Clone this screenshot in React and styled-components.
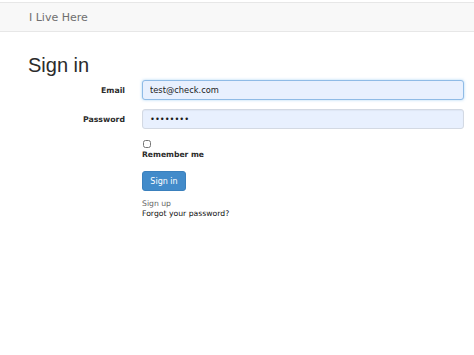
import React from "react";
import styled, { createGlobalStyle } from "styled-components";

const Global = createGlobalStyle`
  html, body { margin: 0; padding: 0; background: #fff; }
  body { font-family: "DejaVu Sans", Verdana, sans-serif; color: #333; }
  * { box-sizing: border-box; }
`;

const Navbar = styled.nav`
  margin-top: 2px;
  height: 30px;
  background: #f8f8f8;
  border-top: 1px solid #e7e7e7;
  border-bottom: 1px solid #e7e7e7;
  display: flex;
  align-items: center;
  padding-left: 29px;
`;

const Brand = styled.a`
  font-family: "DejaVu Sans", Verdana, sans-serif;
  font-size: 11px;
  color: #6f6f6f;
  text-decoration: none;
`;

const Container = styled.main`
  padding: 0 10px 0 28px;
`;

const Title = styled.h1`
  font-family: "Liberation Sans", Arial, sans-serif;
  font-weight: 400;
  font-size: 20px;
  line-height: 22px;
  margin: 22px 0 4px;
  color: #2b2b2b;
`;

const FormRow = styled.div`
  display: grid;
  grid-template-columns: 97px 1fr;
  column-gap: 17px;
  align-items: center;
  margin-bottom: 9px;
`;

const Label = styled.label`
  text-align: right;
  font-weight: 700;
  font-size: 7.8px;
  color: #2b2b2b;
`;

const Input = styled.input`
  height: 20px;
  width: 100%;
  margin: 0;
  padding: 0 7px;
  font-family: "DejaVu Sans", Verdana, sans-serif;
  font-size: 8.3px;
  color: #1a1a1a;
  background: #e8f0fe;
  border: 1px solid ${(p) => (p.$focused ? "#8fbbe6" : "#d3d9e3")};
  border-radius: 3px;
  box-shadow: ${(p) =>
    p.$focused ? "0 0 3px rgba(102,175,233,.55)" : "inset 0 1px 1px rgba(0,0,0,.04)"};
  outline: none;
  caret-color: #222;
`;

const Offset = styled.div`
  margin-left: 114px;
  display: flex;
  flex-direction: column;
  align-items: flex-start;
`;

const Check = styled.input`
  width: 8px;
  height: 8px;
  margin: 2px 0 0 1px;
`;

const CheckLabel = styled.label`
  margin-top: 2px;
  font-weight: 700;
  font-size: 7.6px;
  line-height: 10px;
  color: #2b2b2b;
`;

const Button = styled.button`
  margin-top: 11px;
  height: 20px;
  width: 44px;
  padding: 0;
  font-family: "DejaVu Sans", Verdana, sans-serif;
  font-size: 8px;
  color: #fff;
  background: #428bca;
  border: 1px solid #3a80bd;
  border-radius: 3px;
`;

const Links = styled.div`
  margin-top: 8px;
  display: flex;
  flex-direction: column;
`;

const LinkText = styled.a`
  font-size: 7.7px;
  line-height: 10px;
  color: ${(p) => (p.$muted ? "#666" : "#111")};
  text-decoration: none;
`;

export default function App() {
  return (
    <>
      <Global />
      <Navbar>
        <Brand href="#">I Live Here</Brand>
      </Navbar>
      <Container>
        <Title>Sign in</Title>
        <FormRow>
          <Label>Email</Label>
          <Input $focused type="email" defaultValue="test@check.com" autoFocus />
        </FormRow>
        <FormRow>
          <Label>Password</Label>
          <Input type="password" defaultValue="12345678" />
        </FormRow>
        <Offset>
          <Check type="checkbox" />
          <CheckLabel>Remember me</CheckLabel>
          <Button>Sign in</Button>
          <Links>
            <LinkText $muted href="#">Sign up</LinkText>
            <LinkText href="#">Forgot your password?</LinkText>
          </Links>
        </Offset>
      </Container>
    </>
  );
}
